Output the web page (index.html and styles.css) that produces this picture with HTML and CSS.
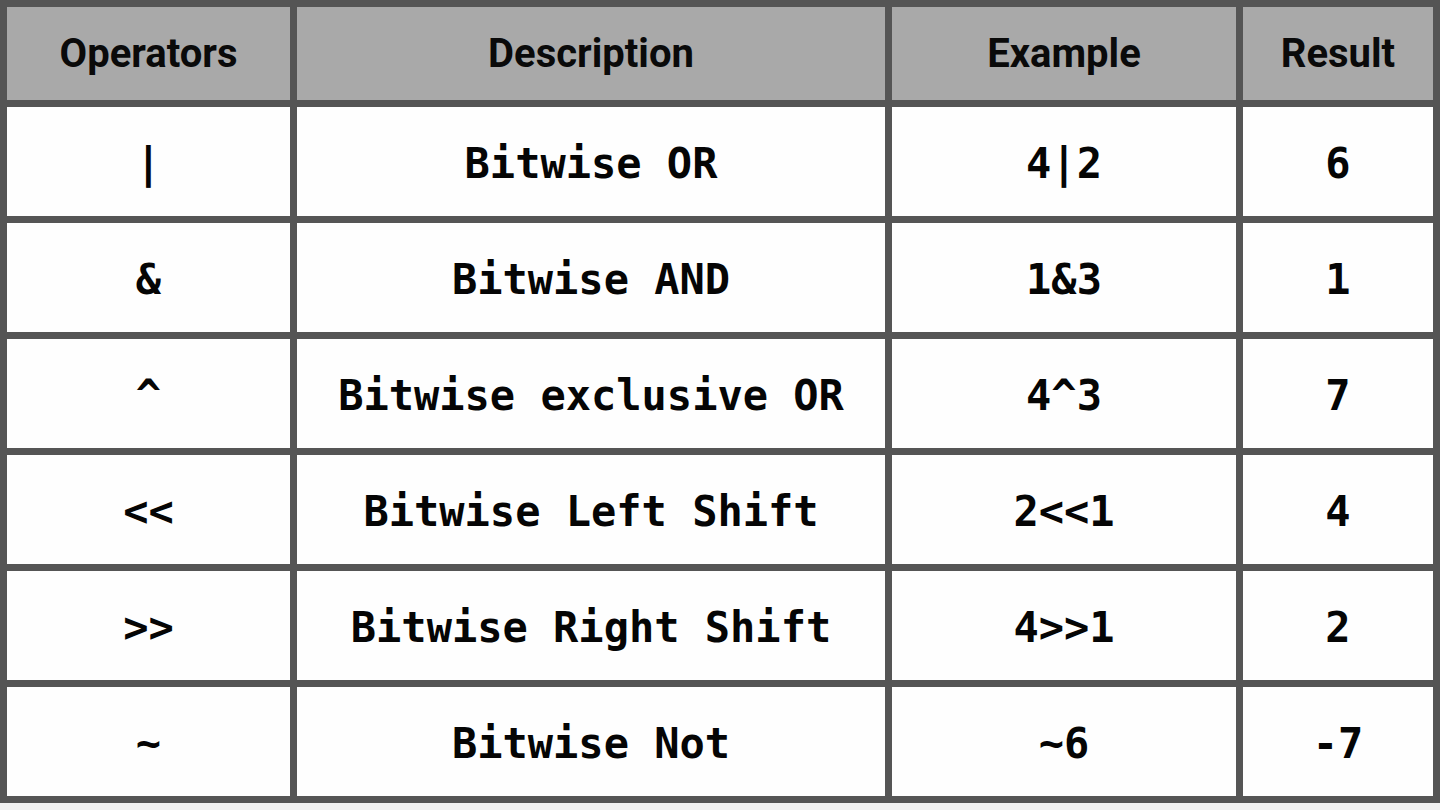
FILE: index.html
```html
<!DOCTYPE html>
<html>
<head>
<meta charset="utf-8">
<link rel="stylesheet" href="styles.css">
</head>
<body>
<table class="ops">
  <colgroup>
    <col class="c1"><col class="c2"><col class="c3"><col class="c4">
  </colgroup>
  <thead>
    <tr><th>Operators</th><th>Description</th><th>Example</th><th>Result</th></tr>
  </thead>
  <tbody>
    <tr><td>|</td><td>Bitwise OR</td><td>4|2</td><td>6</td></tr>
    <tr><td>&amp;</td><td>Bitwise AND</td><td>1&amp;3</td><td>1</td></tr>
    <tr><td>^</td><td>Bitwise exclusive OR</td><td>4^3</td><td>7</td></tr>
    <tr><td>&lt;&lt;</td><td>Bitwise Left Shift</td><td>2&lt;&lt;1</td><td>4</td></tr>
    <tr><td>&gt;&gt;</td><td>Bitwise Right Shift</td><td>4&gt;&gt;1</td><td>2</td></tr>
    <tr><td>~</td><td>Bitwise Not</td><td>~6</td><td>-7</td></tr>
  </tbody>
</table>
</body>
</html>
```
FILE: styles.css
```css
html, body {
  margin: 0;
  padding: 0;
  background: #f2f2f2;
  width: 1440px;
  height: 810px;
  overflow: hidden;
}
.ops {
  border-collapse: separate;
  border-spacing: 7px;
  background: #555555;
  width: 1440px;
  table-layout: fixed;
}
.c1 { width: 283px; }
.c2 { width: 588px; }
.c3 { width: 344px; }
.c4 { width: 190px; }
.ops th, .ops td {
  padding: 0;
  text-align: center;
  vertical-align: middle;
}
.ops th {
  height: 93px;
  background: #a9a9a9;
  font-family: Roboto, "Liberation Sans", sans-serif;
  font-weight: 700;
  font-size: 40px;
  color: #0a0a0a;
}
.ops td {
  height: 109px;
  background: #fefefe;
  font-family: "DejaVu Sans Mono", "Liberation Mono", monospace;
  font-weight: 700;
  font-size: 42px;
  color: #050505;
  white-space: pre;
  padding-top: 4px;
  box-sizing: border-box;
}
```
